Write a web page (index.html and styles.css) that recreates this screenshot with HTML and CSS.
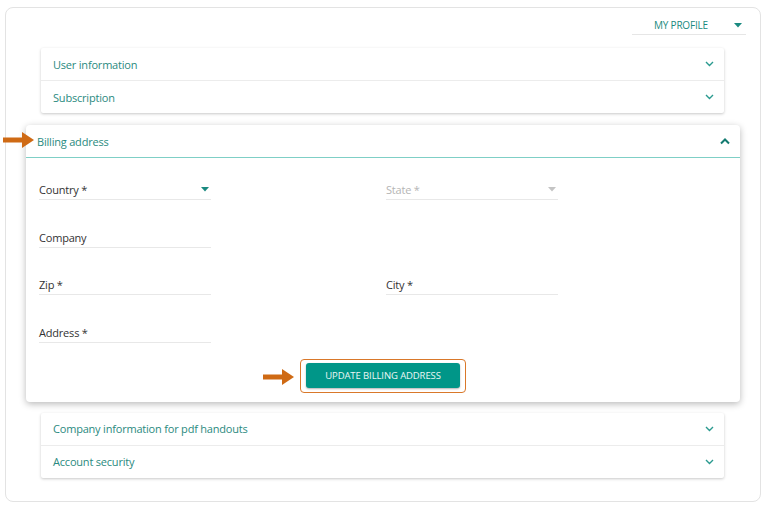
FILE: index.html
```html
<!DOCTYPE html>
<html>
<head>
<meta charset="utf-8">
<link rel="stylesheet" href="styles.css">
</head>
<body>
<div class="card">
  <div class="topbar">
    <div class="profile">
      <span>MY PROFILE</span>
      <svg class="caret" width="8" height="5" viewBox="0 0 8 5"><path d="M0 0h8L4 4.5z" fill="#1a8a80"/></svg>
    </div>
  </div>

  <div class="panel-group">
    <div class="row">
      <span>User information</span>
      <svg class="chev" width="9" height="6" viewBox="0 0 9 6"><path d="M1 1l3.5 3.5L8 1" fill="none" stroke="#2a9a8f" stroke-width="1.4"/></svg>
    </div>
    <div class="row">
      <span>Subscription</span>
      <svg class="chev" width="9" height="6" viewBox="0 0 9 6"><path d="M1 1l3.5 3.5L8 1" fill="none" stroke="#2a9a8f" stroke-width="1.4"/></svg>
    </div>
  </div>

  <div class="expanded">
    <svg class="arrow arrow-head" width="31" height="16" viewBox="0 0 31 16"><path d="M0 5.5h19V0l12 8-12 8v-5.5H0z" fill="#cf6a14"/></svg>
    <div class="exp-header">
      <span>Billing address</span>
      <svg class="chev-up" width="10" height="7" viewBox="0 0 10 7"><path d="M1 5.5l4-4 4 4" fill="none" stroke="#137a70" stroke-width="2"/></svg>
    </div>
    <div class="exp-body">
      <div class="form">
        <div class="field"><span>Country *</span><svg width="8" height="5" viewBox="0 0 8 5"><path d="M0 0h8L4 4.5z" fill="#1a8a80"/></svg></div>
        <div class="field disabled"><span>State *</span><svg width="8" height="5" viewBox="0 0 8 5"><path d="M0 0h8L4 4.5z" fill="#c4c4c4"/></svg></div>
        <div class="field"><span>Company</span></div>
        <div></div>
        <div class="field"><span>Zip *</span></div>
        <div class="field"><span>City *</span></div>
        <div class="field"><span>Address *</span></div>
        <div></div>
      </div>
      <div class="actions">
        <div class="highlight">
          <svg class="arrow arrow-btn" width="31" height="16" viewBox="0 0 31 16"><path d="M0 5.5h19V0l12 8-12 8v-5.5H0z" fill="#cf6a14"/></svg>
          <button class="btn">UPDATE BILLING ADDRESS</button>
        </div>
      </div>
    </div>
  </div>

  <div class="panel-group lower">
    <div class="row">
      <span>Company information for pdf handouts</span>
      <svg class="chev" width="9" height="6" viewBox="0 0 9 6"><path d="M1 1l3.5 3.5L8 1" fill="none" stroke="#2a9a8f" stroke-width="1.4"/></svg>
    </div>
    <div class="row">
      <span>Account security</span>
      <svg class="chev" width="9" height="6" viewBox="0 0 9 6"><path d="M1 1l3.5 3.5L8 1" fill="none" stroke="#2a9a8f" stroke-width="1.4"/></svg>
    </div>
  </div>
</div>
</body>
</html>
```
FILE: styles.css
```css
* { box-sizing: border-box; }
html, body { margin: 0; padding: 0; background: #fff; }
body {
  font-family: "Open Sans", "Liberation Sans", sans-serif;
  font-size: 11px;
  letter-spacing: -0.2px;
  color: #333;
  padding: 7px 7px 6px 5px;
}
.card {
  border: 1px solid #e3e3e3;
  border-radius: 8px;
  height: 495px;
  padding: 6px 20px 0 20px;
}
.topbar {
  display: flex;
  justify-content: flex-end;
  height: 20px;
  margin-right: -6px;
}
.profile {
  width: 114px;
  height: 21px;
  border-bottom: 1px solid #e6e6e6;
  display: flex;
  align-items: center;
  justify-content: space-between;
  padding: 2px 4px 0 22px;
  color: #1a8a80;
  font-size: 10px;
}
.panel-group {
  margin: 14px 16px 0 15px;
  background: #fff;
  box-shadow: 0 1px 3px rgba(0,0,0,0.22);
  border-radius: 2px;
}
.row {
  height: 32px;
  display: flex;
  align-items: center;
  justify-content: space-between;
  padding: 0 10px 0 12px;
  color: #2a8a80;
}
.row + .row { border-top: 1px solid #ececec; height: 33px; }
.expanded {
  position: relative;
  margin: 12px 0 0 0;
  background: #fff;
  box-shadow: 0 2px 7px rgba(0,0,0,0.28);
  border-radius: 4px;
}
.arrow { position: absolute; }
.arrow-head { left: -23px; top: 7px; }
.exp-header {
  height: 33px;
  display: flex;
  align-items: center;
  justify-content: space-between;
  padding: 0 10px 0 11px;
  border-bottom: 1px solid #7fcfc6;
  color: #2a8a80;
}
.exp-body {
  padding: 18px 0 9px 13px;
}
.form {
  display: grid;
  grid-template-columns: 347px 172px;
  row-gap: 23.5px;
}
.field {
  width: 172px;
  height: 24px;
  border-bottom: 1px solid #e8e8e8;
  display: flex;
  align-items: flex-end;
  justify-content: space-between;
  padding: 0 2px 2px 0;
  font-size: 11px;
  color: #333;
}
.field svg { margin-bottom: 5px; }
.field.disabled { color: #b5b5b5; }
.actions {
  display: flex;
  justify-content: center;
  padding-right: 13px;
  margin-top: 16px;
}
.highlight {
  position: relative;
  border: 1.5px solid #d9782a;
  border-radius: 4px;
  padding: 3.5px 5px;
}
.arrow-btn { left: -38px; top: 9px; }
.btn {
  display: block;
  width: 154px;
  height: 25px;
  background: #009688;
  color: #eaf7f5;
  border: none;
  border-radius: 3px;
  box-shadow: 0 1px 2px rgba(0,0,0,0.3);
  font-family: inherit;
  font-size: 9.5px;
  letter-spacing: -0.1px;
  padding: 0;
}
.panel-group.lower { margin-top: 11px; }
```
